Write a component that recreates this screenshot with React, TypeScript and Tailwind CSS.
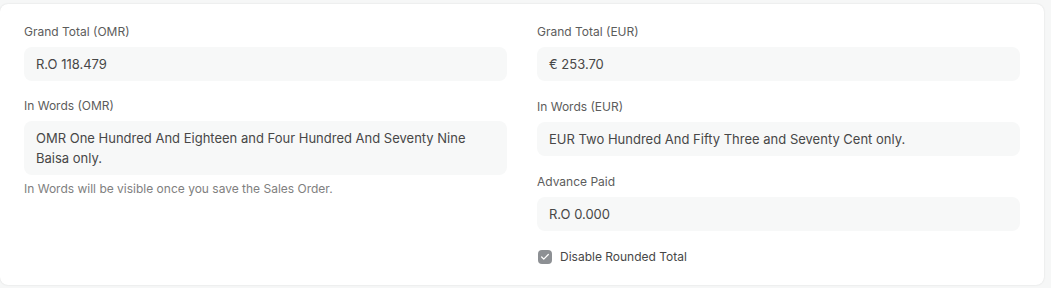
import { Check } from 'lucide-react'

type FieldProps = { label: string; value: string; hint?: string }

const Field = ({ label, value, hint }: FieldProps) => (
  <div className="flex flex-col">
    <label className="text-[12px] leading-4 text-[#5c5c5c] mb-[7px]">{label}</label>
    <div className="bg-[#f7f8f8] rounded-lg px-3 py-[7px] text-[13px] leading-5 text-[#474747]">
      {value}
    </div>
    {hint && <p className="text-[12px] leading-4 text-[#808080] mt-[6px]">{hint}</p>}
  </div>
)

export default function App() {
  return (
    <div className="w-[1051px] h-[288px] bg-[#f6f7f7] pt-1 pr-[7px]" style={{ fontFamily: 'Inter, "Noto Sans", sans-serif' }}>
      <div className="bg-white rounded-lg shadow-[0_0_2px_rgba(0,0,0,0.12)] h-[281px] px-6 pt-5 grid grid-cols-2 gap-x-[30px] antialiased">
        <div className="flex flex-col gap-[17px]">
          <Field label="Grand Total (OMR)" value="R.O 118.479" />
          <Field
            label="In Words (OMR)"
            value="OMR One Hundred And Eighteen and Four Hundred And Seventy Nine Baisa only."
            hint="In Words will be visible once you save the Sales Order."
          />
        </div>
        <div className="flex flex-col gap-[18px]">
          <Field label="Grand Total (EUR)" value="€ 253.70" />
          <Field label="In Words (EUR)" value="EUR Two Hundred And Fifty Three and Seventy Cent only." />
          <Field label="Advance Paid" value="R.O 0.000" />
          <div className="flex items-center gap-2 pl-px">
            <span className="w-[14px] h-[14px] rounded-[4px] bg-[#8d9094] flex items-center justify-center">
              <Check size={10} strokeWidth={3} color="white" />
            </span>
            <span className="text-[12px] leading-4 text-[#474747]">Disable Rounded Total</span>
          </div>
        </div>
      </div>
    </div>
  )
}
